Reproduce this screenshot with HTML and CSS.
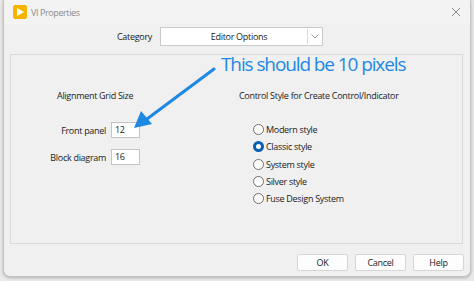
FILE: index.html
```html
<!DOCTYPE html>
<html>
<head>
<meta charset="utf-8">
<link rel="stylesheet" href="styles.css">
</head>
<body>
<div class="window">
  <div class="titlebar">
    <svg class="appicon" width="14" height="14" viewBox="0 0 14 14"><rect x="0" y="0" width="14" height="14" rx="2" fill="#f5b400"/><path d="M4 3 L11 7 L4 11 Z" fill="#fff"/></svg>
    <span class="title">VI Properties</span>
    <svg class="close" width="10" height="10" viewBox="0 0 10 10"><path d="M1 1 L9 9 M9 1 L1 9" stroke="#8a8a8a" stroke-width="1"/></svg>
  </div>
  <div class="catrow">
    <span class="catlabel">Category</span>
    <div class="select">
      <span class="selval">Editor Options</span>
      <span class="selbtn"><svg width="8" height="5" viewBox="0 0 8 5"><path d="M0.5 0.5 L4 4 L7.5 0.5" fill="none" stroke="#999" stroke-width="1"/></svg></span>
    </div>
  </div>
  <div class="panel">
    <div class="col left">
      <div class="heading">Alignment Grid Size</div>
      <div class="field"><span class="flabel">Front panel</span><span class="input">12</span></div>
      <div class="field"><span class="flabel">Block diagram</span><span class="input">16</span></div>
    </div>
    <div class="col right">
      <div class="heading">Control Style for Create Control/Indicator</div>
      <div class="radios">
        <div class="radio"><span class="dot"></span>Modern style</div>
        <div class="radio"><span class="dot on"></span>Classic style</div>
        <div class="radio"><span class="dot"></span>System style</div>
        <div class="radio"><span class="dot"></span>Silver style</div>
        <div class="radio"><span class="dot"></span>Fuse Design System</div>
      </div>
    </div>
  </div>
  <div class="buttons">
    <span class="btn">OK</span>
    <span class="btn">Cancel</span>
    <span class="btn">Help</span>
  </div>
  <div class="note">This should be 10 pixels</div>
  <svg class="arrow" width="474" height="281" viewBox="0 0 474 281">
    <line x1="213" y1="69" x2="146" y2="119" stroke="#1e88e5" stroke-width="3" stroke-linecap="round"/>
    <path d="M133 128 L140 111 L151 124 Z" fill="#1e88e5"/>
  </svg>
</div>
</body>
</html>
```

FILE: styles.css
```css
* { box-sizing: border-box; }
html, body { margin: 0; padding: 0; }
body {
  width: 474px;
  height: 281px;
  background: #e9e9e9;
  font-family: "Open Sans", "Noto Sans", sans-serif;
  font-size: 9px;
  letter-spacing: -0.3px;
  color: #1a1a1a;
  overflow: hidden;
}
.window {
  position: relative;
  margin: 0 3px;
  height: 277px;
  background: #f0f0f0;
  border: 1px solid #c4c4c4;
  border-top: none;
  border-radius: 0 0 7px 7px;
  box-shadow: 0 1px 3px rgba(0,0,0,0.25);
}
.titlebar {
  height: 24px;
  display: flex;
  align-items: center;
  padding: 0 0 0 9px;
  background: #f3f3f3;
}
.appicon { flex: none; }
.title {
  margin-left: 4px;
  color: #8c8c8c;
  font-size: 9px;
  letter-spacing: -0.4px;
}
.close { margin-left: auto; margin-right: 9px; }
.catrow {
  display: flex;
  align-items: center;
  padding-left: 113px;
  height: 20px;
  margin-top: 2px;
}
.catlabel { width: 43px; }
.select {
  width: 163px;
  height: 19px;
  background: #fff;
  border: 1px solid #c9c9c9;
  display: flex;
  align-items: center;
}
.selval { flex: 1; text-align: center; padding-left: 10px; }
.selbtn {
  width: 14px;
  height: 15px;
  border-left: 1px solid #dcdcdc;
  display: flex;
  align-items: center;
  justify-content: center;
  margin-right: 1px;
}
.panel {
  margin: 8px 7px 0 6px;
  height: 190px;
  border: 1px solid #dadada;
  display: flex;
  padding-top: 34px;
}
.col.left { width: 228px; padding-left: 46px; }
.col.right { flex: 1; padding-left: 0; }
.heading { height: 14px; line-height: 14px; white-space: nowrap; }
.left .heading { margin-bottom: 19px; }
.field {
  display: flex;
  align-items: center;
  height: 16px;
  margin-bottom: 11px;
}
.flabel { width: 49px; text-align: right; margin-right: 5px; white-space: nowrap; direction: rtl; }
.input {
  width: 29px;
  height: 16px;
  background: #fff;
  border: 1px solid #c4c4c4;
  padding-left: 3px;
  line-height: 14px;
}
.radios { margin-top: 18px; padding-left: 14px; }
.radio {
  display: flex;
  align-items: center;
  height: 17.3px;
  white-space: nowrap;
}
.dot {
  width: 11px;
  height: 11px;
  border-radius: 50%;
  border: 1px solid #6e6e6e;
  background: #fff;
  margin-right: 2px;
}
.dot.on {
  border: 3px solid #0a5fb4;
  background: #fff;
}
.buttons {
  display: flex;
  justify-content: flex-end;
  gap: 7px;
  margin-top: 10px;
  padding-right: 6px;
}
.btn {
  width: 51px;
  height: 17px;
  background: #fdfdfd;
  border: 1px solid #d6d6d6;
  border-radius: 2px;
  text-align: center;
  line-height: 15px;
}
.note {
  position: absolute;
  left: 217px;
  top: 51px;
  font-size: 19px;
  letter-spacing: -1.1px;
  color: #1e88e5;
  font-family: "Open Sans", sans-serif;
  white-space: nowrap;
}
.arrow { position: absolute; left: -3px; top: 0; pointer-events: none; }
```
